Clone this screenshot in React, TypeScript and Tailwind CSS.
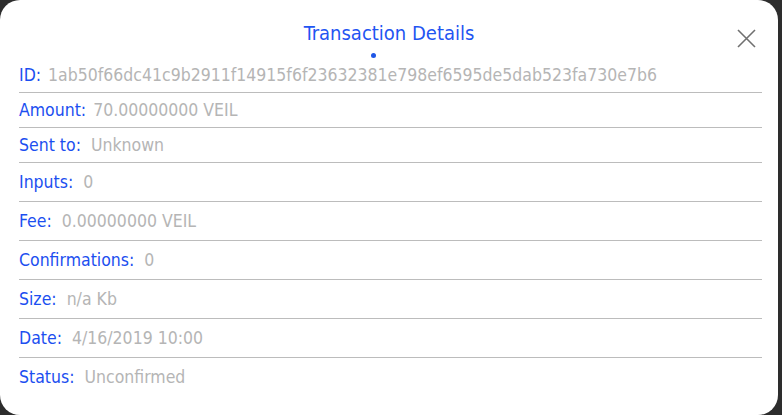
type Row = { label: string; value: string; wide?: boolean }

const rows: Row[] = [
  { label: "ID:", value: "1ab50f66dc41c9b2911f14915f6f23632381e798ef6595de5dab523fa730e7b6" },
  { label: "Amount:", value: "70.00000000 VEIL" },
  { label: "Sent to:", value: "Unknown", wide: true },
  { label: "Inputs:", value: "0", wide: true },
  { label: "Fee:", value: "0.00000000 VEIL", wide: true },
  { label: "Confirmations:", value: "0", wide: true },
  { label: "Size:", value: "n/a Kb", wide: true },
  { label: "Date:", value: "4/16/2019 10:00", wide: true },
  { label: "Status:", value: "Unconfirmed", wide: true },
]

export default function App() {
  return (
    <div className="h-[415px] w-[782px] overflow-hidden bg-[#2d2d2d] [font-family:'DejaVu_Sans_Condensed','DejaVu_Sans',sans-serif] [font-stretch:condensed]">
      <div className="relative h-[415px] w-[778px] rounded-[20px] bg-white">
        <button className="absolute right-[22px] top-[29px]">
          <svg width="19" height="19" viewBox="0 0 19 19" fill="none" stroke="#707070" strokeWidth="1.6">
            <path d="M1 1L18 18M18 1L1 18" />
          </svg>
        </button>

        <div className="flex flex-col items-center pt-[20px]">
          <h1 className="text-[20px] leading-[27px] text-[#1f55f2]">Transaction Details</h1>
          <div className="mt-[6px] mr-[32px] h-[5px] w-[5px] rounded-full bg-[#1f56e6]" />
        </div>

        <div className="pl-[19px] pr-[16px]">
          {rows.map((row, i) => (
            <div
              key={row.label}
              className={`flex items-center text-[17.5px] ${i > 2 ? "h-[39px]" : "h-[35px]"} ${
                i < rows.length - 1 ? "border-b border-[#bcbcbc]" : ""
              }`}
            >
              <span className="text-[#1c4ff0]">{row.label}</span>
              <span className={`text-[#b5b5b5] ${row.wide ? "ml-[10px]" : "ml-[7px]"}`}>{row.value}</span>
            </div>
          ))}
        </div>
      </div>
    </div>
  )
}
